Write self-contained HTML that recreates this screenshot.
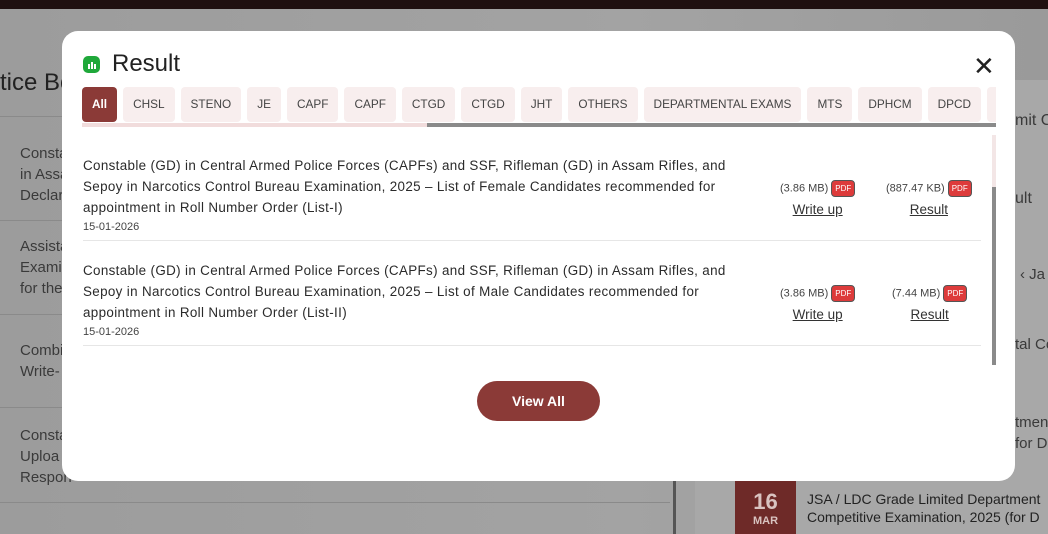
<!DOCTYPE html>
<html><head><meta charset="utf-8"><style>
*{box-sizing:border-box;margin:0;padding:0}
body{width:1048px;height:534px;overflow:hidden;position:relative;background:#9a9a9a;font-family:"Liberation Sans",sans-serif;color:#222}
.top{position:absolute;left:0;top:0;width:1048px;height:9px;background:#1f1010}
.bg{position:absolute;top:9px;left:0;width:1048px;height:525px;background:linear-gradient(90deg,#9c9c9c,#a3a3a3 60%,#9a9a9a)}
.bgt{position:absolute;color:#3a3a3a;font-size:15px;line-height:21px;white-space:nowrap}
.hl{position:absolute;height:1px;background:#8a8a8a}
.modal{position:absolute;left:62px;top:31px;width:953px;height:450px;background:#fff;border-radius:16px;overflow:hidden}
.title{position:absolute;left:50px;top:19px;font-size:24px;color:#222}
.ico{position:absolute;left:21px;top:25px;width:17px;height:17px;border-radius:5px;background:#1fa83a}
.ico i{position:absolute;bottom:4px;width:2px;background:#fff}
.close{position:absolute;left:911px;top:25px;font-size:26px;line-height:20px}
.tabs{position:absolute;left:20px;top:56px;width:914px;height:35px;overflow:hidden;white-space:nowrap}
.tab{display:inline-block;height:35px;line-height:35px;padding:0 10px;margin-right:6px;background:#f8eeee;border-radius:4px;font-size:11.8px;color:#444;vertical-align:top}
.tab.on{background:#8b3a37;color:#fff;font-weight:bold;padding:0 10px}
.sb1{position:absolute;left:20px;top:92px;width:345px;height:4px;background:#f1dcdc}
.sb2{position:absolute;left:365px;top:92px;width:569px;height:4px;background:#8a8a8a}
.item{position:absolute;left:21px;width:898px;border-bottom:1px solid #e6e6e6}
.item p{font-size:13.4px;line-height:21px;color:#2a2a2a;width:660px;letter-spacing:0.35px}
.item .d{font-size:11px;color:#444;margin-top:3px}
.c{position:absolute;font-size:11px;color:#444;text-align:center;white-space:nowrap}
.pdf{display:inline-block;background:#dd3b3b;color:#fff;font-size:8px;border-radius:4px;padding:3px 3px;border:1px solid #555;vertical-align:middle;margin-left:3px}
.c a{display:block;font-size:13.5px;color:#333;text-decoration:underline;margin-top:5px}
.vs{position:absolute;left:930px;top:104px;width:4px;height:230px;background:#f3e6e6}
.vs i{position:absolute;left:0;top:52px;width:4px;height:178px;background:#8a8a8a}
.btn{position:absolute;left:415px;top:350px;width:123px;height:40px;border-radius:20px;background:#8b3a37;color:#fff;font-weight:bold;font-size:14px;text-align:center;line-height:40px}
</style></head><body>
<div class="top"></div><div class="bg"></div>
<div class="bgt" style="left:0;top:72px;font-size:24px;color:#222">tice Bo</div>
<div class="hl" style="left:0;top:116px;width:670px"></div>
<div class="bgt" style="left:20px;top:143px">Consta<br>in Assa<br>Declar</div>
<div class="hl" style="left:0;top:220px;width:670px"></div>
<div class="bgt" style="left:20px;top:236px">Assista<br>Examin<br>for the</div>
<div class="hl" style="left:0;top:314px;width:670px"></div>
<div class="bgt" style="left:20px;top:340px">Combi<br>Write-</div>
<div class="hl" style="left:0;top:407px;width:670px"></div>
<div class="bgt" style="left:20px;top:425px">Consta<br>Uploa<br>Respon</div>
<div class="hl" style="left:0;top:502px;width:670px"></div>
<div style="position:absolute;left:673px;top:480px;width:3px;height:54px;background:#555"></div>
<div style="position:absolute;left:695px;top:80px;width:353px;height:454px;background:#a8a8a8"></div>
<div class="bgt" style="left:1015px;top:110px;font-size:16px">mit C</div>
<div class="bgt" style="left:1015px;top:188px;font-size:16px">ult</div>
<div class="bgt" style="left:1020px;top:264px">‹ Ja</div>
<div class="bgt" style="left:1015px;top:334px">tal Co</div>
<div class="bgt" style="left:1015px;top:412px">tment<br>for D</div>
<div style="position:absolute;left:735px;top:481px;width:61px;height:53px;background:#6e2a28;color:#d9c3c0;text-align:center"><div style="font-size:22px;font-weight:bold;margin-top:8px">16</div><div style="font-size:11px;font-weight:bold">MAR</div></div>
<div class="bgt" style="left:807px;top:490px;font-size:14px;line-height:18px;color:#222">JSA / LDC Grade Limited Department<br>Competitive Examination, 2025 (for D</div>
<div class="modal">
<div class="ico"><i style="left:5px;height:5px"></i><i style="left:8px;height:7px"></i><i style="left:11px;height:5px"></i></div>
<div class="title">Result</div>
<div class="close">✕</div>
<div class="tabs"><span class="tab on">All</span><span class="tab">CHSL</span><span class="tab">STENO</span><span class="tab">JE</span><span class="tab">CAPF</span><span class="tab">CAPF</span><span class="tab">CTGD</span><span class="tab">CTGD</span><span class="tab">JHT</span><span class="tab">OTHERS</span><span class="tab">DEPARTMENTAL EXAMS</span><span class="tab">MTS</span><span class="tab">DPHCM</span><span class="tab">DPCD</span><span class="tab">SSC</span></div>
<div class="sb1"></div><div class="sb2"></div>
<div class="item" style="top:124px;height:86px"><p>Constable (GD) in Central Armed Police Forces (CAPFs) and SSF, Rifleman (GD) in Assam Rifles, and Sepoy in Narcotics Control Bureau Examination, 2025 – List of Female Candidates recommended for appointment in Roll Number Order (List-I)</p><div class="d">15-01-2026</div></div>
<div class="c" style="left:718px;top:149px">(3.86 MB)<span class="pdf">PDF</span><a>Write up</a></div>
<div class="c" style="left:824px;top:149px">(887.47 KB)<span class="pdf">PDF</span><a>Result</a></div>
<div class="item" style="top:229px;height:86px"><p>Constable (GD) in Central Armed Police Forces (CAPFs) and SSF, Rifleman (GD) in Assam Rifles, and Sepoy in Narcotics Control Bureau Examination, 2025 – List of Male Candidates recommended for appointment in Roll Number Order (List-II)</p><div class="d">15-01-2026</div></div>
<div class="c" style="left:718px;top:254px">(3.86 MB)<span class="pdf">PDF</span><a>Write up</a></div>
<div class="c" style="left:830px;top:254px">(7.44 MB)<span class="pdf">PDF</span><a>Result</a></div>
<div class="vs"><i></i></div>
<div class="btn">View All</div>
</div>
</body></html>
